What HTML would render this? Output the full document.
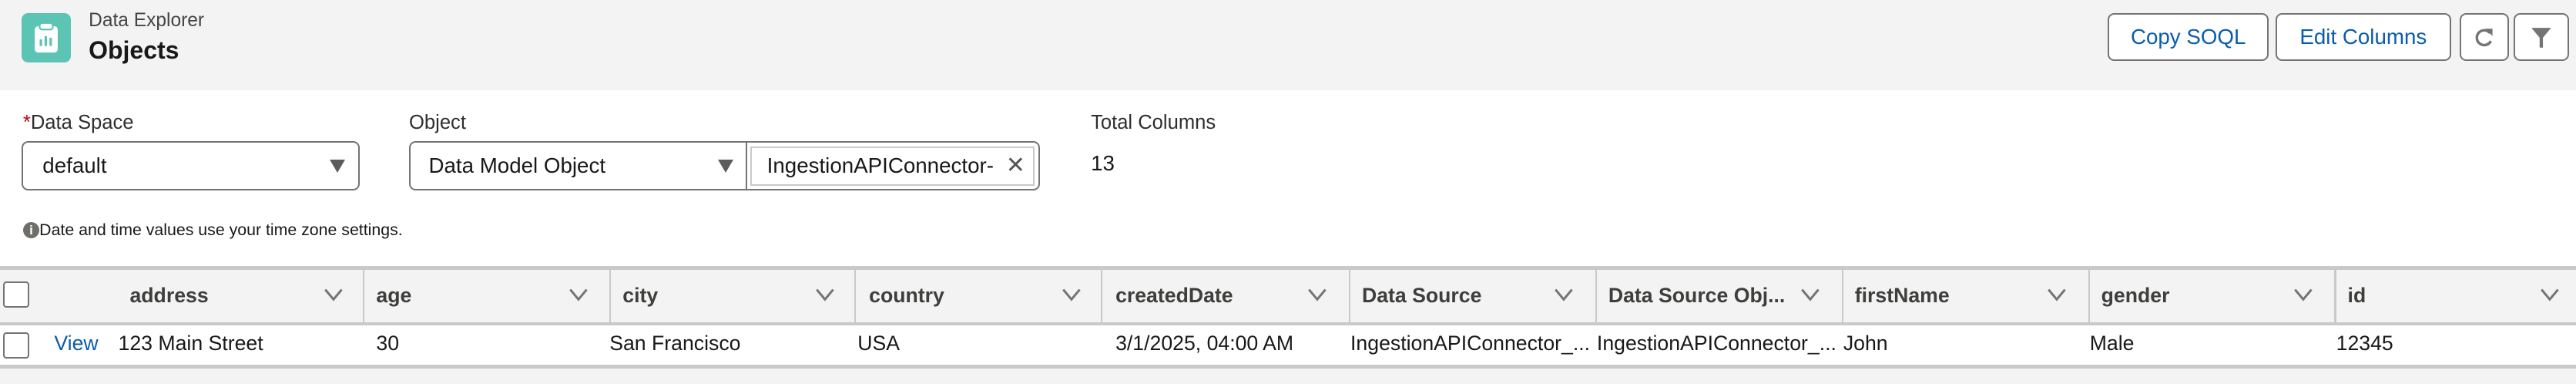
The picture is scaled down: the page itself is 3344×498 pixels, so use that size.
<!DOCTYPE html>
<html><head><meta charset="utf-8"><style>
html,body{margin:0;padding:0;background:#f3f3f3;overflow:hidden}
body{width:3344px;height:498px}
#r{zoom:2.13265;width:1568px;height:234px;position:relative;font-family:"Liberation Sans",sans-serif;color:#181818}
.a{position:absolute;white-space:nowrap}
.btn{position:absolute;top:8px;height:29px;border:1px solid #747474;border-radius:4px;background:#fff;box-sizing:border-box;color:#0b5cab;font-size:13px;line-height:27px;text-align:center}
.lbl{font-size:12px;color:#2e2e2e;top:68px}
.box{position:absolute;top:86px;height:30px;border:1px solid #747474;border-radius:4px;background:#fff;box-sizing:border-box;font-size:13px;line-height:28px}
.tri{position:absolute;width:0;height:0;border-left:5px solid transparent;border-right:5px solid transparent;border-top:8px solid #5c5c5c;top:10px}
.hd{position:absolute;top:163px;height:33px;font-size:12.5px;font-weight:bold;color:#3e3e3c;line-height:33px}
.sep{position:absolute;top:164px;width:1px;height:32px;background:#c9c9c9}
.chev{position:absolute;top:172px;width:14px;height:14px}
.cell{position:absolute;top:196px;font-size:12.5px;line-height:26px;white-space:nowrap}
.cb{position:absolute;left:2px;width:14px;height:14px;border:1px solid #747474;border-radius:2px;background:#fff}
</style></head><body><div id="r">
<div class="a" style="left:0;top:55px;width:1568px;height:108px;background:#fff"></div>
<div class="a" style="left:13px;top:8px;width:30px;height:30px;background:#5bc4b5;border-radius:4px"></div>
<svg class="a" style="left:13px;top:8px" width="30" height="30" viewBox="0 0 30 30"><rect x="8" y="8" width="14" height="16" rx="2" fill="#fff"/><rect x="11" y="6" width="8" height="4" rx="1.5" fill="#fff" stroke="#5bc4b5" stroke-width="1"/><rect x="11" y="16" width="1.5" height="4" fill="#5bc4b5"/><rect x="14" y="14" width="1.5" height="6" fill="#5bc4b5"/><rect x="17" y="15" width="1.5" height="5" fill="#5bc4b5"/></svg>
<div class="a" style="left:54px;top:6px;font-size:11.5px;color:#444">Data Explorer</div>
<div class="a" style="left:54px;top:22px;font-size:15px;font-weight:bold">Objects</div>
<div class="btn" style="left:1283px;width:98px">Copy SOQL</div>
<div class="btn" style="left:1385px;width:107px">Edit Columns</div>
<div class="btn" style="left:1497px;width:30px"><svg width="14" height="14" viewBox="0 0 14 14" style="margin-top:7px"><path d="M10.5 4.2A4.5 4.5 0 1 0 11 9" fill="none" stroke="#747474" stroke-width="1.6"/><path d="M7.5 1.5h4.5v4.5z" fill="#747474"/></svg></div>
<div class="btn" style="left:1530px;width:34px"><svg width="14" height="14" viewBox="0 0 14 14" style="margin-top:7px"><path d="M1 1h12L8 7v6H6V7z" fill="#747474"/></svg></div>
<div class="a lbl" style="left:14px"><span style="color:#ba0517">*</span>Data Space</div>
<div class="a lbl" style="left:249px">Object</div>
<div class="a lbl" style="left:664px">Total Columns</div>
<div class="box" style="left:13px;width:206px;padding-left:12px">default<div class="tri" style="right:8px"></div></div>
<div class="box" style="left:249px;width:384px;padding-left:11px">Data Model Object<div class="tri" style="left:187px"></div>
<div style="position:absolute;left:204px;top:-1px;width:1px;height:30px;background:#747474"></div>
<div style="position:absolute;left:207px;top:2px;width:173px;height:24px;box-sizing:border-box;border:1px solid #c9c9c9;line-height:22px;padding-left:9px">IngestionAPIConnector-<span style="position:absolute;right:5px;top:0;font-size:14px;color:#555">✕</span></div></div>
<div class="a" style="left:664px;top:92px;font-size:13px">13</div>
<div class="a" style="left:14px;top:135px;width:10px;height:10px;border-radius:50%;background:#706e6b;color:#fff;font-size:8px;font-weight:bold;text-align:center;line-height:10px">i</div>
<div class="a" style="left:24px;top:134px;font-size:10px;color:#181818">Date and time values use your time zone settings.</div>
<div class="a" style="left:0;top:162px;width:1568px;height:2px;background:#c9c9c9"></div>
<div class="a" style="left:0;top:196px;width:1568px;height:2px;background:#c9c9c9"></div>
<div class="a" style="left:0;top:198px;width:1568px;height:24px;background:#fff"></div>
<div class="a" style="left:0;top:222px;width:1568px;height:2px;background:#c9c9c9"></div>
<div class="cb" style="top:171px"></div><div class="cb" style="top:202px"></div>
<div class="hd" style="left:79px">address</div>
<div class="hd" style="left:229px">age</div>
<div class="hd" style="left:379px">city</div>
<div class="hd" style="left:529px">country</div>
<div class="hd" style="left:679px">createdDate</div>
<div class="hd" style="left:829px">Data Source</div>
<div class="hd" style="left:979px">Data Source Obj...</div>
<div class="hd" style="left:1129px">firstName</div>
<div class="hd" style="left:1279px">gender</div>
<div class="hd" style="left:1429px">id</div>
<div class="sep" style="left:221px"></div><div class="sep" style="left:371px"></div><div class="sep" style="left:520px"></div><div class="sep" style="left:670px"></div><div class="sep" style="left:821px"></div><div class="sep" style="left:971px"></div><div class="sep" style="left:1121px"></div><div class="sep" style="left:1271px"></div><div class="sep" style="left:1421px"></div>
<svg class="chev" style="left:196px" viewBox="0 0 14 14"><path d="M2 4l5 6 5-6" fill="none" stroke="#747474" stroke-width="1.4"/></svg>
<svg class="chev" style="left:345px" viewBox="0 0 14 14"><path d="M2 4l5 6 5-6" fill="none" stroke="#747474" stroke-width="1.4"/></svg>
<svg class="chev" style="left:495px" viewBox="0 0 14 14"><path d="M2 4l5 6 5-6" fill="none" stroke="#747474" stroke-width="1.4"/></svg>
<svg class="chev" style="left:645px" viewBox="0 0 14 14"><path d="M2 4l5 6 5-6" fill="none" stroke="#747474" stroke-width="1.4"/></svg>
<svg class="chev" style="left:795px" viewBox="0 0 14 14"><path d="M2 4l5 6 5-6" fill="none" stroke="#747474" stroke-width="1.4"/></svg>
<svg class="chev" style="left:945px" viewBox="0 0 14 14"><path d="M2 4l5 6 5-6" fill="none" stroke="#747474" stroke-width="1.4"/></svg>
<svg class="chev" style="left:1095px" viewBox="0 0 14 14"><path d="M2 4l5 6 5-6" fill="none" stroke="#747474" stroke-width="1.4"/></svg>
<svg class="chev" style="left:1245px" viewBox="0 0 14 14"><path d="M2 4l5 6 5-6" fill="none" stroke="#747474" stroke-width="1.4"/></svg>
<svg class="chev" style="left:1395px" viewBox="0 0 14 14"><path d="M2 4l5 6 5-6" fill="none" stroke="#747474" stroke-width="1.4"/></svg>
<svg class="chev" style="left:1545px" viewBox="0 0 14 14"><path d="M2 4l5 6 5-6" fill="none" stroke="#747474" stroke-width="1.4"/></svg>
<div class="cell" style="left:33px;color:#0b5cab">View</div>
<div class="cell" style="left:72px">123 Main Street</div>
<div class="cell" style="left:229px">30</div>
<div class="cell" style="left:371px">San Francisco</div>
<div class="cell" style="left:522px">USA</div>
<div class="cell" style="left:679px">3/1/2025, 04:00 AM</div>
<div class="cell" style="left:822px">IngestionAPIConnector_...</div>
<div class="cell" style="left:972px">IngestionAPIConnector_...</div>
<div class="cell" style="left:1122px">John</div>
<div class="cell" style="left:1272px">Male</div>
<div class="cell" style="left:1422px">12345</div>
</div></body></html>
